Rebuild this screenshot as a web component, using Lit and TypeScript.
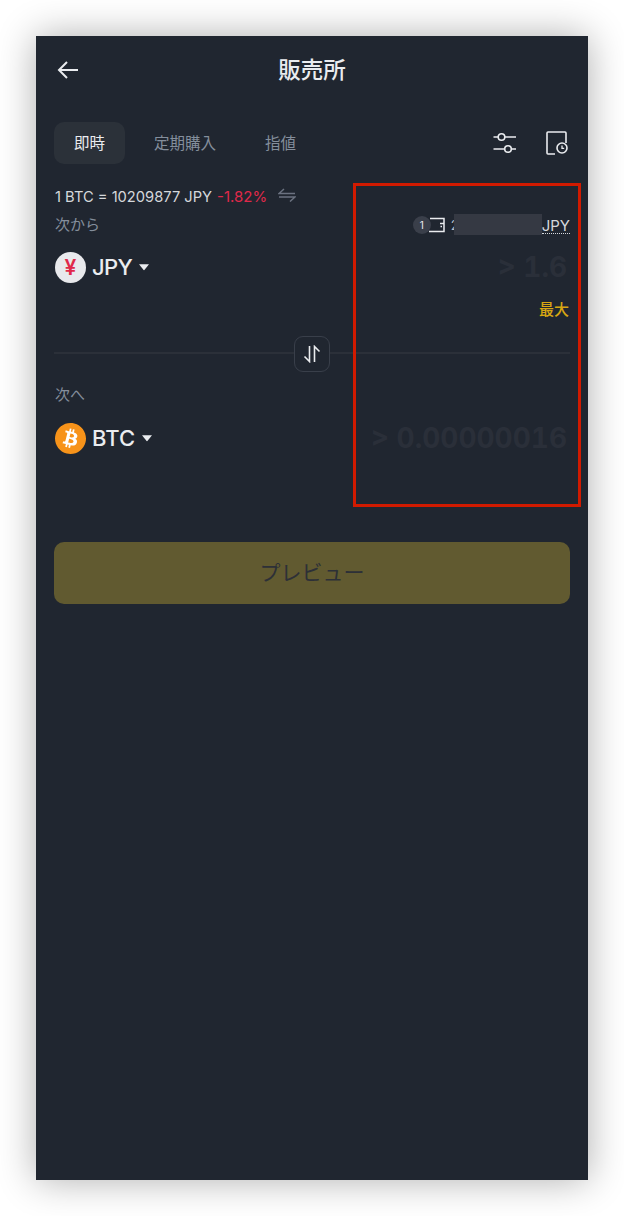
import { html, LitElement, css, TemplateResult } from "lit";
import { customElement } from "lit/decorators.js";

const BITCOIN =
  "M23.638 14.904c-1.602 6.43-8.113 10.34-14.542 8.736C2.67 22.05-1.244 15.525.362 9.105 1.962 2.67 8.475-1.243 14.9.358c6.43 1.605 10.342 8.115 8.738 14.548v-.002zm-6.35-4.613c.24-1.59-.974-2.45-2.64-3.03l.54-2.153-1.315-.33-.525 2.107c-.345-.087-.705-.167-1.064-.25l.526-2.127-1.32-.33-.54 2.165c-.285-.067-.565-.132-.84-.2l-1.815-.45-.35 1.407s.975.225.955.236c.535.136.63.486.615.766l-1.477 5.92c-.075.166-.24.406-.614.314.015.02-.96-.24-.96-.24l-.66 1.51 1.71.426.93.242-.54 2.19 1.32.327.54-2.17c.36.1.705.19 1.05.273l-.51 2.154 1.32.33.545-2.19c2.24.427 3.93.257 4.64-1.774.57-1.637-.03-2.58-1.217-3.196.854-.193 1.5-.76 1.68-1.93h.01zm-3.01 4.22c-.404 1.64-3.157.75-4.05.53l.72-2.9c.896.23 3.757.67 3.33 2.37zm.41-4.24c-.37 1.49-2.662.735-3.405.55l.654-2.64c.744.18 3.137.524 2.75 2.084v.006z";

@customElement("app-root")
export class AppRoot extends LitElement {
  static styles = css`
    :host {
      display: block;
      width: 624px;
      height: 1216px;
      background: #fff;
      font-family: Inter, "Noto Sans CJK JP", sans-serif;
    }

    .page {
      padding: 36px;
    }

    .screen {
      position: relative;
      height: 1144px;
      box-sizing: border-box;
      padding: 0 18px;
      background: #202630;
      box-shadow: 0 0 36px rgba(0, 0, 0, 0.32);
      color: #eaecef;
      display: flex;
      flex-direction: column;
    }

    .header {
      height: 68px;
      box-sizing: border-box;
      padding-bottom: 4px;
      display: flex;
      align-items: center;
      justify-content: center;
      position: relative;
      font-size: 22.5px;
      font-weight: 500;
    }

    .back {
      position: absolute;
      left: 3px;
      top: 24px;
      width: 22px;
      height: 20px;
    }

    .tabs {
      margin-top: 18px;
      height: 42px;
      display: flex;
      align-items: center;
      font-size: 15.5px;
      color: #848e9c;
    }

    .tab {
      height: 42px;
      box-sizing: border-box;
      padding: 0 20px 3px;
      display: flex;
      align-items: center;
      margin-right: 9px;
      border-radius: 10px;
    }

    .tab.active {
      background: #2b3139;
      color: #eaecef;
    }

    .tools {
      margin-left: auto;
      display: flex;
      align-items: center;
      gap: 29px;
    }

    .rate {
      margin-top: 22px;
      height: 20px;
      box-sizing: border-box;
      padding: 1px 0 0 1px;
      display: flex;
      align-items: center;
      font-size: 14.7px;
      color: #d5d8dc;
    }

    .rate .change {
      color: #e0294a;
      font-size: 15px;
      margin-left: 5px;
    }

    .rate svg {
      margin-left: 11px;
      margin-top: -4px;
    }

    .line {
      display: flex;
      align-items: center;
      justify-content: space-between;
    }

    .label {
      font-size: 15px;
      color: #848e9c;
      padding-left: 1px;
    }

    .from-label .label {
      margin-bottom: 2px;
    }

    .balance {
      display: flex;
      align-items: center;
      font-size: 15px;
      color: #d5d8dc;
    }

    .badge {
      width: 18px;
      height: 18px;
      border-radius: 50%;
      background: #3a3f4a;
      color: #eaecef;
      font-size: 10px;
      display: flex;
      align-items: center;
      justify-content: center;
      margin-top: 2px;
      margin-right: -3px;
    }

    .wallet {
      margin-top: 2px;
    }

    .masked {
      width: 88px;
      height: 21px;
      background: #353943;
    }

    .digit {
      font-size: 13px;
      color: #b7bdc6;
      margin: 2px -5px 0 5px;
    }

    .unit {
      border-bottom: 1px dotted #d5d8dc;
      line-height: 15px;
      margin-top: 3px;
    }

    .from-label {
      margin-top: 6px;
      height: 24px;
    }

    .coin {
      display: flex;
      align-items: center;
      font-size: 22px;
      font-weight: 500;
      height: 32px;
      padding-left: 1px;
    }

    .coin .name {
      margin-left: 6px;
    }

    .coin .name.tight {
      letter-spacing: -0.6px;
    }

    .coin .caret {
      margin-left: 6px;
    }

    .yen {
      width: 31px;
      height: 31px;
      border-radius: 50%;
      background: #e8e9ec;
      color: #e0294a;
      font-size: 21px;
      font-weight: 600;
      display: flex;
      align-items: center;
      justify-content: center;
    }

    .amount {
      font-size: 28px;
      font-weight: 700;
      line-height: 32px;
      font-feature-settings: "tnum";
      color: #2a2f39;
      padding-right: 3px;
    }

    .from-coin {
      margin-top: 15px;
    }

    .max {
      margin-top: 17px;
      padding-right: 1px;
      text-align: right;
      font-size: 15px;
      font-weight: 500;
      color: #d8a612;
      line-height: 20px;
    }

    .divider {
      margin-top: 16px;
      height: 36px;
      display: flex;
      align-items: center;
      justify-content: center;
      position: relative;
    }

    .divider::before {
      content: "";
      position: absolute;
      left: 0;
      right: 0;
      top: 16px;
      height: 2px;
      background: #2b3039;
    }

    .switch {
      position: relative;
      width: 36px;
      height: 36px;
      box-sizing: border-box;
      border: 1.5px solid #393f4a;
      border-radius: 9px;
      background: #202630;
      display: flex;
      align-items: center;
      justify-content: center;
    }

    .to-label {
      margin-top: 11px;
      height: 24px;
    }

    .to-coin {
      margin-top: 15px;
    }

    .preview {
      margin-top: 88px;
      height: 62px;
      box-sizing: border-box;
      padding-bottom: 4px;
      border-radius: 10px;
      background: #615a30;
      color: #2d3037;
      font-size: 21px;
      display: flex;
      align-items: center;
      justify-content: center;
    }

    .highlight {
      position: absolute;
      left: 317px;
      top: 147px;
      width: 228px;
      height: 324px;
      box-sizing: border-box;
      border: 3.5px solid #d11a00;
    }
  `;

  private renderCaret(): TemplateResult {
    return html`<svg class="caret" width="12" height="8" viewBox="0 0 12 8">
      <path d="M1 1.2h10L6.4 7 Q6 7.3 5.6 7z" fill="#eaecef"></path>
    </svg>`;
  }

  render(): TemplateResult {
    return html`<div class="page">
      <div class="screen">
        <div class="header">
          <svg class="back" viewBox="0 0 22 20" fill="none" stroke="#eaecef" stroke-width="2">
            <path d="M21 10H2M10 2l-8 8 8 8"></path>
          </svg>
          販売所
        </div>

        <div class="tabs">
          <div class="tab active">即時</div>
          <div class="tab">定期購入</div>
          <div class="tab">指値</div>
          <div class="tools">
            <svg width="24" height="24" viewBox="0 0 24 24" fill="none" stroke="#eaecef" stroke-width="1.6">
              <path d="M0.5 6h4.5M12 6h11M0.5 18h11M18.5 18h4.5"></path>
              <circle cx="8.5" cy="6" r="3.3"></circle>
              <circle cx="15" cy="18" r="3.3"></circle>
            </svg>
            <svg width="24" height="24" viewBox="0 0 24 24" fill="none" stroke="#eaecef" stroke-width="1.6">
              <path d="M9 23H2a1 1 0 0 1-1-1V2a1 1 0 0 1 1-1h17a1 1 0 0 1 1 1v10"></path>
              <circle cx="16" cy="17" r="5" fill="#202630"></circle>
              <path d="M16 14.5v2.9h2.2" stroke-width="1.3"></path>
            </svg>
          </div>
        </div>

        <div class="rate">
          1 BTC = 10209877 JPY<span class="change">-1.82%</span>
          <svg width="18" height="14" viewBox="0 0 18 14" fill="none" stroke="#6b7280" stroke-width="1.5">
            <path d="M17 5.5H1L6 1M1 9h16l-5 4.5"></path>
          </svg>
        </div>

        <div class="line from-label">
          <span class="label">次から</span>
          <span class="balance">
            <span class="badge">1</span>
            <svg class="wallet" width="18" height="16" viewBox="0 0 18 16" fill="none" stroke="#eaecef" stroke-width="1.5">
              <path d="M2 1.5h14v13H1M16 6.5h-4M14 9.5h-1.5"></path>
            </svg>
            <span class="digit">2</span>
            <span class="masked"></span>
            <span class="unit">JPY</span>
          </span>
        </div>

        <div class="line from-coin">
          <div class="coin">
            <span class="yen">¥</span>
            <span class="name tight">JPY</span>
            ${this.renderCaret()}
          </div>
          <div class="amount">&gt; 1.6</div>
        </div>

        <div class="max">最大</div>

        <div class="divider">
          <div class="switch">
            <svg width="18" height="18" viewBox="0 0 18 18" fill="none" stroke="#eaecef" stroke-width="1.6">
              <path d="M6.5 1v15.5L1.5 11.5M11.5 17V1.5l5 5"></path>
            </svg>
          </div>
        </div>

        <div class="to-label label">次へ</div>

        <div class="line to-coin">
          <div class="coin">
            <svg width="31" height="31" viewBox="0 0 24 24">
              <circle cx="12" cy="12" r="9" fill="#fff"></circle>
              <path d=${BITCOIN} fill="#f7931a"></path>
            </svg>
            <span class="name">BTC</span>
            ${this.renderCaret()}
          </div>
          <div class="amount">&gt; 0.00000016</div>
        </div>

        <div class="preview">プレビュー</div>

        <div class="highlight"></div>
      </div>
    </div>`;
  }
}
